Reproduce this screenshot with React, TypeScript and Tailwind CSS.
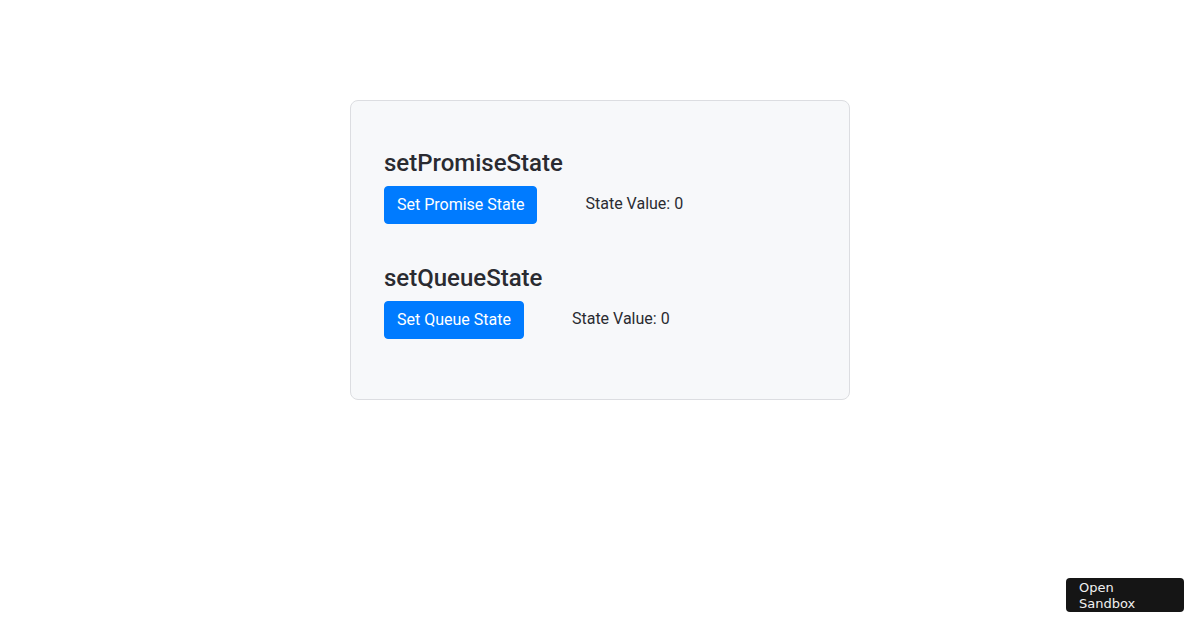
import React, { useState } from 'react';

const font = { fontFamily: 'Roboto, "Liberation Sans", sans-serif' };

function StateSection({ title, label, value, onClick, last }: { title: string; label: string; value: number; onClick: () => void; last?: boolean }) {
  return (
    <div className={last ? '' : 'mb-10'}>
      <h4 className="text-[24px] font-medium leading-[1.2] mb-2 text-[#2a2b31]">{title}</h4>
      <div className="flex items-center">
        <button
          onClick={onClick}
          className="bg-[#007bff] text-white text-[16px] leading-[1.5] px-3 py-1.5 border border-[#007bff] rounded"
        >
          {label}
        </button>
        <span className="ml-12 text-[16px] text-[#2a2b31] -mt-px">State Value: {value}</span>
      </div>
    </div>
  );
}

export default function App() {
  const [promiseValue, setPromiseValue] = useState(0);
  const [queueValue, setQueueValue] = useState(0);

  return (
    <div className="relative w-full h-[630px] bg-white" style={font}>
      <div className="flex justify-center pt-[100px]">
        <div className="w-[500px] h-[300px] bg-[#f7f8fa] border border-[#dcdde1] rounded-lg pl-[33px] pt-[48px]">
          <StateSection title="setPromiseState" label="Set Promise State" value={promiseValue} onClick={() => setPromiseValue(v => v + 1)} />
          <StateSection title="setQueueState" label="Set Queue State" value={queueValue} onClick={() => setQueueValue(v => v + 1)} last />
        </div>
      </div>
      <div
        className="absolute right-[16px] bottom-[18px] w-[118px] h-[34px] bg-[#151515] rounded text-[#f0f0f0] text-[13px] leading-[16px] pl-[13px] pt-[2px] flex flex-col"
        style={{ fontFamily: '"DejaVu Sans", sans-serif' }}
      >
        <span>Open</span>
        <span>Sandbox</span>
      </div>
    </div>
  );
}
